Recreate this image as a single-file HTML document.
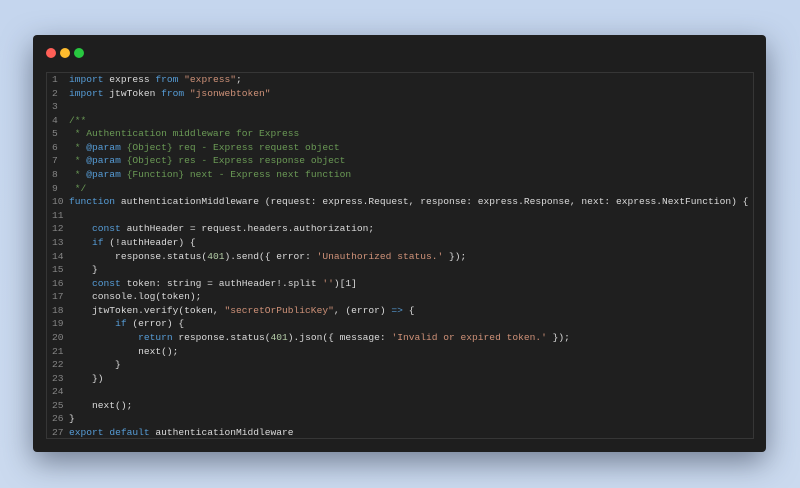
<!DOCTYPE html>
<html><head><style>
html,body{margin:0;padding:0;}
body{width:800px;height:488px;overflow:hidden;background:linear-gradient(180deg,#c5d6ee 0%,#cbdaef 100%);position:relative;}
.win{position:absolute;left:33px;top:35px;width:733px;height:417px;background:#1e1e1e;border-radius:4px;box-shadow:0 10px 30px rgba(40,50,70,0.55);}
.dot{position:absolute;top:13px;width:10px;height:10px;border-radius:50%;}
.panel{position:absolute;left:13px;top:37px;width:708px;height:367px;background:#1f1f1f;border:1px solid #363636;box-sizing:border-box;}
pre{margin:0;position:absolute;left:0;top:0;font-family:"Liberation Mono",monospace;font-size:9.6px;line-height:13.58px;color:#dadada;}
.ln{position:absolute;left:5px;top:0px;color:#858585;text-align:left;}
.code{position:absolute;left:22px;top:0px;}
.k{color:#569cd6}.s{color:#ce9178}.c{color:#6a9955}.n{color:#b5cea8}
</style></head><body>
<div class="win">
<div class="dot" style="left:13px;background:#ff5f57"></div>
<div class="dot" style="left:27px;background:#febc2e"></div>
<div class="dot" style="left:41px;background:#28c840"></div>
<div class="panel">
<pre class="ln">1
2
3
4
5
6
7
8
9
10
11
12
13
14
15
16
17
18
19
20
21
22
23
24
25
26
27</pre>
<pre class="code"><span class="k">import</span> express <span class="k">from</span> <span class="s">"express"</span>;
<span class="k">import</span> jtwToken <span class="k">from</span> <span class="s">"jsonwebtoken"</span>

<span class="c">/**</span>
<span class="c"> * Authentication middleware for Express</span>
<span class="c"> * </span><span class="k">@param</span><span class="c"> {Object} req - Express request object</span>
<span class="c"> * </span><span class="k">@param</span><span class="c"> {Object} res - Express response object</span>
<span class="c"> * </span><span class="k">@param</span><span class="c"> {Function} next - Express next function</span>
<span class="c"> */</span>
<span class="k">function</span> authenticationMiddleware (request: express.Request, response: express.Response, next: express.NextFunction) {

    <span class="k">const</span> authHeader = request.headers.authorization;
    <span class="k">if</span> (!authHeader) {
        response.status(<span class="n">401</span>).send({ error: <span class="s">'Unauthorized status.'</span> });
    }
    <span class="k">const</span> token: string = authHeader!.split <span class="s">''</span>)[1]
    console.log(token);
    jtwToken.verify(token, <span class="s">"secretOrPublicKey"</span>, (error) <span class="k">=&gt;</span> {
        <span class="k">if</span> (error) {
            <span class="k">return</span> response.status(<span class="n">401</span>).json({ message: <span class="s">'Invalid or expired token.'</span> });
            next();
        }
    })

    next();
}
<span class="k">export</span> <span class="k">default</span> authenticationMiddleware</pre>
</div>
</div>
</body></html>
